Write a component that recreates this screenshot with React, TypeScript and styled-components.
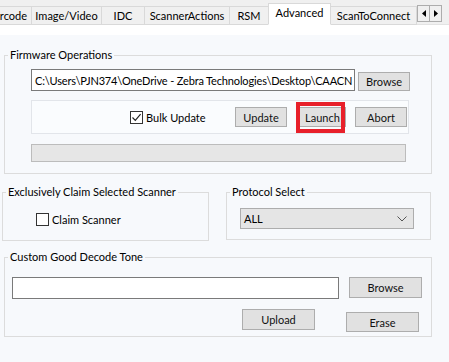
import React from 'react';
import styled, { createGlobalStyle } from 'styled-components';

const GlobalStyle = createGlobalStyle`
  html, body {
    margin: 0;
    padding: 0;
  }
  body {
    font-family: Lato, "Noto Sans", sans-serif;
    font-size: 11px;
    color: #000;
  }
`;

const tabs = [
  { label: 'Barcode', width: 33, clip: true },
  { label: 'Image/Video', width: 71 },
  { label: 'IDC', width: 44 },
  { label: 'ScannerActions', width: 86 },
  { label: 'RSM', width: 40 },
  { label: 'Advanced', width: 63, active: true },
  { label: 'ScanToConnect', width: 87 },
];

export default function App() {
  return (
    <Screen>
      <GlobalStyle />
      <TabStrip>
        {tabs.map((t) => (
          <Tab key={t.label} $width={t.width} $active={t.active} $clip={t.clip}>
            <span>{t.label}</span>
          </Tab>
        ))}
        <Scroller>
          <ScrollButton>
            <svg width="4" height="7" viewBox="0 0 4 7">
              <path d="M4 0 L0 3.5 L4 7 Z" fill="#000" />
            </svg>
          </ScrollButton>
          <ScrollButton>
            <svg width="4" height="7" viewBox="0 0 4 7">
              <path d="M0 0 L4 3.5 L0 7 Z" fill="#000" />
            </svg>
          </ScrollButton>
        </Scroller>
      </TabStrip>

      <Page>
        <Panel>
          <Group $left={4} $width={428} $top={12}>
            <Legend>Firmware Operations</Legend>
            <GroupBody $pad="6px 0 11px 26px">
              <PathRow>
                <TextBox $width={324} $tight>
                  <span>C:\Users\PJN374\OneDrive - Zebra Technologies\Desktop\CAACN</span>
                </TextBox>
                <Button $width={52} $height={19} $ml={3}>Browse</Button>
              </PathRow>

              <UpdateBox>
                <CheckLabel $width={105}>
                  <Check>
                    <svg width="11" height="11" viewBox="0 0 11 11">
                      <path d="M1.5 5.5 L4.3 8.4 L9.6 2.2" fill="none" stroke="#222" strokeWidth="1.2" />
                    </svg>
                  </Check>
                  Bulk Update
                </CheckLabel>
                <Button $width={52}>Update</Button>
                <Highlight $ml={12}>
                  <Button $width={47}>Launch</Button>
                  <RedFrame />
                </Highlight>
                <Button $width={52} $ml={9}>Abort</Button>
              </UpdateBox>

              <Progress />
            </GroupBody>
          </Group>

          <SplitRow>
            <Group $left={2} $width={207} $top={10}>
              <Legend>Exclusively Claim Selected Scanner</Legend>
              <GroupBody $pad="13px 0 14px 33px">
                <CheckLabel $width={120}>
                  <Check />
                  Claim Scanner
                </CheckLabel>
              </GroupBody>
            </Group>
            <Group $left={17} $width={205} $top={10}>
              <Legend>Protocol Select</Legend>
              <GroupBody $pad="8px 0 10px 13px">
                <Select>
                  <span>ALL</span>
                  <svg width="10" height="6" viewBox="0 0 10 6">
                    <path d="M0.5 0.5 L5 5 L9.5 0.5" fill="none" stroke="#555" strokeWidth="1" />
                  </svg>
                </Select>
              </GroupBody>
            </Group>
          </SplitRow>

          <Group $left={4} $width={428} $top={8}>
            <Legend>Custom Good Decode Tone</Legend>
            <GroupBody $pad="12px 0 4px 7px">
              <ToneRow>
                <TextBox $width={327} />
                <Button $width={73} $height={21} $ml={10}>Browse</Button>
              </ToneRow>
              <ToneRow>
                <Button $width={73} $height={21} $ml={230} $mt={10}>Upload</Button>
                <Button $width={73} $height={20} $ml={31} $mt={13}>Erase</Button>
              </ToneRow>
            </GroupBody>
          </Group>
        </Panel>
      </Page>
    </Screen>
  );
}

const Screen = styled.div`
  width: 449px;
  height: 362px;
  overflow: hidden;
  background: #f7f9fc;
  display: flex;
  flex-direction: column;
`;

const TabStrip = styled.div`
  height: 25px;
  flex: none;
  background: #f0f0f0;
  display: flex;
  align-items: flex-end;
  border-bottom: 1px solid #e3e3e3;
  box-sizing: border-box;
  position: relative;
`;

const Tab = styled.div<{ $width: number; $active?: boolean; $clip?: boolean }>`
  width: ${(p) => p.$width}px;
  height: ${(p) => (p.$active ? 22 : 19)}px;
  box-sizing: border-box;
  flex: none;
  display: flex;
  align-items: center;
  justify-content: ${(p) => (p.$clip ? 'flex-end' : 'center')};
  overflow: hidden;
  white-space: nowrap;
  background: ${(p) => (p.$active ? '#ffffff' : '#f0f0f0')};
  border: 1px solid #d9d9d9;
  border-left: ${(p) => (p.$clip ? 'none' : '1px solid #d9d9d9')};
  border-bottom: ${(p) => (p.$active ? '1px solid #fff' : '1px solid #d9d9d9')};
  margin-left: -1px;
  margin-bottom: -1px;
  padding-bottom: ${(p) => (p.$active ? 3 : 0)}px;
  font-size: 11px;
  color: #000;
  position: relative;
  z-index: ${(p) => (p.$active ? 1 : 0)};
  span {
    padding-right: ${(p) => (p.$clip ? 4 : 0)}px;
  }
`;

const Scroller = styled.div`
  display: flex;
  align-self: flex-start;
  margin-top: 5px;
`;

const ScrollButton = styled.div`
  width: 13px;
  height: 17px;
  box-sizing: border-box;
  border: 1px solid #adadad;
  background: #f0f0f0;
  display: flex;
  align-items: center;
  justify-content: center;
  & + & {
    margin-left: -1px;
  }
`;

const Page = styled.div`
  flex: 1;
  background: #ffffff;
  padding-top: 10px;
  display: flex;
`;

const Panel = styled.div`
  flex: 1;
  background: #f7f9fc;
  display: flex;
  flex-direction: column;
  align-items: flex-start;
`;

const Group = styled.fieldset<{ $left: number; $width: number; $top: number }>`
  margin: ${(p) => p.$top}px 0 0 ${(p) => p.$left}px;
  width: ${(p) => p.$width}px;
  box-sizing: border-box;
  border: 1px solid #dcdcdc;
  padding: 0;
  min-inline-size: 0;
`;

const Legend = styled.legend`
  margin-left: 3px;
  padding: 0 2px;
  line-height: 16px;
  font-size: 11px;
  color: #000;
`;

const GroupBody = styled.div<{ $pad: string }>`
  padding: ${(p) => p.$pad};
  display: flex;
  flex-direction: column;
  align-items: flex-start;
`;

const PathRow = styled.div`
  display: flex;
  align-items: flex-end;
`;

const TextBox = styled.div<{ $width: number; $tight?: boolean }>`
  width: ${(p) => p.$width}px;
  height: 22px;
  box-sizing: border-box;
  border: 1px solid #7a7a7a;
  background: #fff;
  display: flex;
  align-items: center;
  padding-left: 3px;
  overflow: hidden;
  white-space: nowrap;
  font-size: 11px;
  letter-spacing: ${(p) => (p.$tight ? '-0.15px' : 'normal')};
`;

const Button = styled.div<{ $width: number; $height?: number; $ml?: number; $mt?: number }>`
  width: ${(p) => p.$width}px;
  height: ${(p) => p.$height ?? 20}px;
  margin-left: ${(p) => p.$ml ?? 0}px;
  margin-top: ${(p) => p.$mt ?? 0}px;
  box-sizing: border-box;
  flex: none;
  border: 1px solid #adadad;
  background: #e1e1e1;
  display: flex;
  align-items: center;
  justify-content: center;
  font-size: 11px;
  color: #111;
`;

const UpdateBox = styled.div`
  width: 378px;
  height: 34px;
  margin-top: 9px;
  box-sizing: border-box;
  border: 1px solid #e2e5ea;
  background: #fafcfe;
  display: flex;
  align-items: center;
  padding-left: 98px;
`;

const CheckLabel = styled.label<{ $width: number }>`
  display: flex;
  align-items: center;
  gap: 3px;
  flex: none;
  width: ${(p) => p.$width}px;
  white-space: nowrap;
  font-size: 11px;
`;

const Check = styled.span`
  width: 13px;
  height: 13px;
  box-sizing: border-box;
  border: 1px solid #333;
  background: #fff;
  display: flex;
  align-items: center;
  justify-content: center;
`;

const Highlight = styled.div<{ $ml: number }>`
  position: relative;
  flex: none;
  margin-left: ${(p) => p.$ml}px;
`;

const RedFrame = styled.div`
  position: absolute;
  left: -3px;
  top: -5px;
  width: 49px;
  height: 31px;
  box-sizing: border-box;
  border: 4px solid #e8202a;
`;

const Progress = styled.div`
  width: 375px;
  height: 18px;
  margin-top: 10px;
  box-sizing: border-box;
  border: 1px solid #bcbcbc;
  background: #e6e6e6;
`;

const SplitRow = styled.div`
  display: flex;
  align-items: flex-start;
`;

const Select = styled.div`
  width: 174px;
  height: 21px;
  box-sizing: border-box;
  border: 1px solid #adadad;
  background: #e5e5e5;
  display: flex;
  align-items: center;
  justify-content: space-between;
  padding: 0 6px 0 3px;
  font-size: 11px;
`;

const ToneRow = styled.div`
  display: flex;
  align-items: flex-start;
`;
